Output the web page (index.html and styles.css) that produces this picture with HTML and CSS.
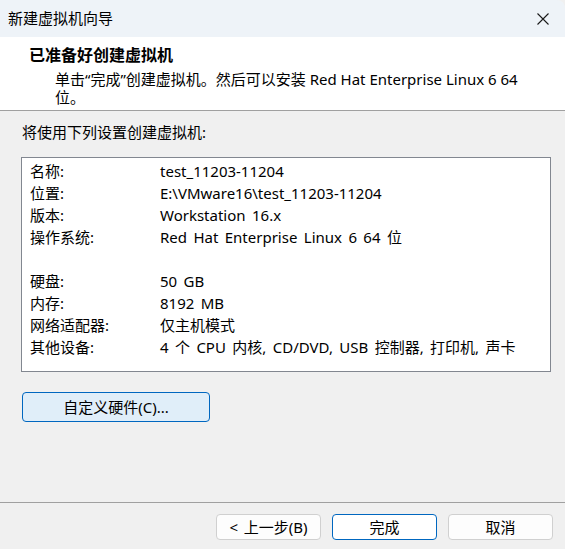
FILE: index.html
```html
<!DOCTYPE html>
<html lang="zh-CN">
<head>
  <meta charset="UTF-8">
  <title>新建虚拟机向导</title>
  <link rel="stylesheet" href="styles.css">
</head>
<body>
  <div class="window">
    <div class="titlebar">
      <span class="title">新建虚拟机向导</span>
      <svg class="close" width="12" height="12" viewBox="0 0 12 12">
        <path d="M0.5 0.5 L11.5 11.5 M11.5 0.5 L0.5 11.5" stroke="#1a1a1a" stroke-width="1.1" fill="none"/>
      </svg>
    </div>

    <div class="header">
      <div class="header-title">已准备好创建虚拟机</div>
      <div class="header-sub">单击“完成”创建虚拟机。然后可以安装 Red Hat Enterprise Linux 6 64 位。</div>
    </div>

    <div class="main">
      <div class="intro">将使用下列设置创建虚拟机:</div>
      <div class="summary">
        <div class="row"><span class="label">名称:</span><span>test_11203-11204</span></div>
        <div class="row"><span class="label">位置:</span><span>E:\VMware16\test_11203-11204</span></div>
        <div class="row"><span class="label">版本:</span><span>Workstation 16.x</span></div>
        <div class="row"><span class="label">操作系统:</span><span>Red Hat Enterprise Linux 6 64 位</span></div>
        <div class="row blank"></div>
        <div class="row"><span class="label">硬盘:</span><span>50 GB</span></div>
        <div class="row"><span class="label">内存:</span><span>8192 MB</span></div>
        <div class="row"><span class="label">网络适配器:</span><span>仅主机模式</span></div>
        <div class="row"><span class="label">其他设备:</span><span>4 个 CPU 内核, CD/DVD, USB 控制器, 打印机, 声卡</span></div>
      </div>
      <button class="btn btn-custom">自定义硬件(C)...</button>
    </div>

    <div class="footer">
      <button class="btn">&lt; 上一步(B)</button>
      <button class="btn btn-default">完成</button>
      <button class="btn">取消</button>
    </div>
  </div>
</body>
</html>
```

FILE: styles.css
```css
/* Base */
html, body {
  margin: 0;
  padding: 0;
}

body {
  font-family: "Noto Sans", "Noto Sans CJK SC", sans-serif;
  font-size: 15px;
  color: #000;
  background: #f0f0f0;
}

.window {
  width: 565px;
  height: 549px;
  display: flex;
  flex-direction: column;
  overflow: hidden;
}

/* Title bar */
.titlebar {
  height: 37px;
  flex: none;
  background: #eef3f8;
  display: flex;
  align-items: center;
  justify-content: space-between;
  padding: 0 16px 0 8px;
  box-sizing: border-box;
  border-top-right-radius: 8px;
}

.title {
  font-size: 15px;
  line-height: 20px;
  margin-top: -1px;
}

.close {
  display: block;
}

/* Header */
.header {
  height: 74px;
  flex: none;
  box-sizing: border-box;
  background: #fff;
  border-bottom: 1px solid #a0a0a0;
  padding: 8px 0 0 29px;
}

.header-title {
  font-size: 16px;
  font-weight: bold;
  line-height: 20px;
}

.header-sub {
  width: 470px;
  line-height: 18px;
  padding-left: 26px;
  margin-top: 5px;
}

/* Main */
.main {
  flex: 1;
  padding: 11px 14px 0 21px;
  border-bottom: 1px solid #a0a0a0;
}

.intro {
  line-height: 20px;
  padding-left: 1px;
}

.summary {
  margin-top: 15px;
  height: 215px;
  box-sizing: border-box;
  background: #fff;
  border: 1px solid #828790;
  padding: 2px 8px;
}

.row {
  display: flex;
  height: 22px;
  line-height: 22px;
  white-space: nowrap;
  word-spacing: 2.5px;
}

.label {
  width: 130px;
  flex: none;
}

/* Buttons */
.btn {
  font-family: inherit;
  font-size: 15px;
  color: #000;
  width: 105px;
  height: 26px;
  padding: 0;
  line-height: 22px;
  background: #fdfdfd;
  border: 1px solid #d0d0d0;
  border-radius: 4px;
  word-spacing: 2px;
}

.btn-custom {
  display: block;
  width: 188px;
  height: 30px;
  margin: 20px 0 0 1px;
  background: #e0eef9;
  border-color: #0067c0;
}

.btn-default {
  border-color: #0067c0;
  background: #fff;
}

/* Footer */
.footer {
  height: 46px;
  flex: none;
  box-sizing: border-box;
  display: flex;
  justify-content: flex-end;
  gap: 11px;
  padding: 11px 12px 0 0;
}
```
